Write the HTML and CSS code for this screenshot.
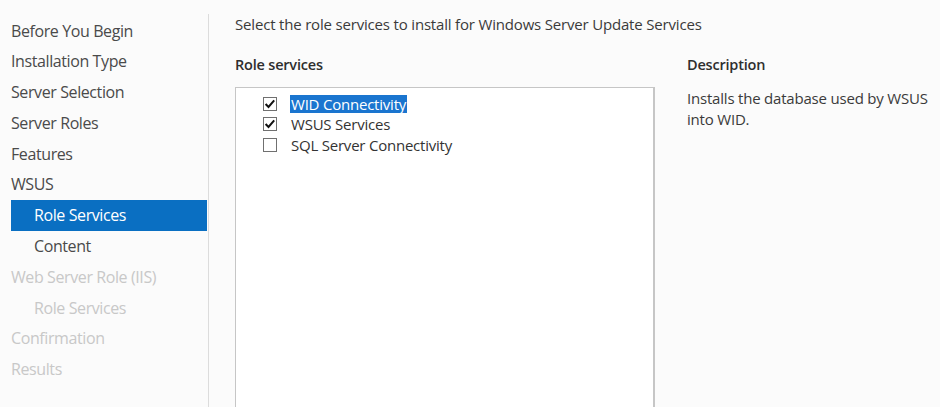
FILE: index.html
```html
<!DOCTYPE html>
<html>
<head>
<meta charset="utf-8">
<link rel="stylesheet" href="styles.css">
</head>
<body>
<div class="wizard">
  <nav class="steps">
    <div class="step">Before You Begin</div>
    <div class="step">Installation Type</div>
    <div class="step">Server Selection</div>
    <div class="step">Server Roles</div>
    <div class="step">Features</div>
    <div class="step">WSUS</div>
    <div class="step sub active">Role Services</div>
    <div class="step sub">Content</div>
    <div class="step disabled">Web Server Role (IIS)</div>
    <div class="step sub disabled">Role Services</div>
    <div class="step disabled">Confirmation</div>
    <div class="step disabled">Results</div>
  </nav>
  <main class="content">
    <div class="title">Select the role services to install for Windows Server Update Services</div>
    <div class="columns">
      <section class="roles">
        <div class="label">Role services</div>
        <div class="listbox">
          <div class="item"><span class="cb"><svg viewBox="0 0 14 14" width="14" height="14"><path d="M2.6 7 L5.5 10 L11.2 3.4" fill="none" stroke="#111" stroke-width="2"/></svg></span><span class="name selected">WID Connectivity</span></div>
          <div class="item"><span class="cb"><svg viewBox="0 0 14 14" width="14" height="14"><path d="M2.6 7 L5.5 10 L11.2 3.4" fill="none" stroke="#111" stroke-width="2"/></svg></span><span class="name">WSUS Services</span></div>
          <div class="item"><span class="cb"></span><span class="name">SQL Server Connectivity</span></div>
        </div>
      </section>
      <section class="desc">
        <div class="label">Description</div>
        <p class="desc-text">Installs the database used by WSUS into WID.</p>
      </section>
    </div>
  </main>
</div>
</body>
</html>
```

FILE: styles.css
```css
html, body {
  margin: 0;
  padding: 0;
  background: #fbfbfb;
}
body {
  font-family: "Open Sans", "Noto Sans", sans-serif;
  color: #3c3c3c;
  overflow: hidden;
}
.wizard {
  display: flex;
  height: 407px;
  overflow: hidden;
}
.steps {
  flex: none;
  width: 209px;
  box-sizing: border-box;
  padding: 1.5px 0 0 11px;
  margin-top: 14px;
  border-right: 1px solid #dcdcdc;
  display: flex;
  flex-direction: column;
}
.step {
  height: 30.8px;
  line-height: 30.8px;
  font-size: 16px;
  color: #4a4a4a;
  letter-spacing: -0.4px;
  white-space: nowrap;
  margin-right: 1px;
}
.step.sub {
  padding-left: 23px;
}
.step.active {
  background: #0a6fc2;
  color: #ffffff;
}
.step.disabled {
  color: #c8c8c8;
}
.content {
  flex: 1;
  padding-left: 26px;
  padding-top: 13px;
  display: flex;
  flex-direction: column;
}
.title {
  font-size: 15px;
  color: #3a3a3a;
  letter-spacing: -0.18px;
  line-height: 22px;
}
.columns {
  display: flex;
  flex: 1;
  margin-top: 20px;
}
.roles {
  flex: none;
  width: 420px;
  display: flex;
  flex-direction: column;
}
.label {
  font-size: 14.5px;
  font-weight: 600;
  color: #2e2e2e;
  line-height: 20px;
  letter-spacing: -0.2px;
}
.listbox {
  flex: 1;
  margin-top: 12px;
  background: #ffffff;
  border: 1px solid #c6c6c6;
  border-right-width: 2px;
  border-bottom: none;
  box-sizing: border-box;
  padding: 6px 0 0 27px;
}
.item {
  display: flex;
  align-items: center;
  height: 20.3px;
}
.cb {
  flex: none;
  width: 14px;
  height: 14px;
  box-sizing: border-box;
  border: 1px solid #707070;
  background: #fff;
  position: relative;
  margin-right: 13px;
}
.cb svg {
  display: block;
  position: absolute;
  left: -1px;
  top: -1px;
}
.name {
  font-size: 15px;
  color: #333;
  letter-spacing: -0.22px;
  line-height: 18px;
  padding: 0 1px;
}
.name.selected {
  background: #1a75cf;
  color: #fff;
}
.desc {
  flex: none;
  margin-left: 32px;
  width: 250px;
}
.desc-text {
  margin: 13px 0 0 0;
  font-size: 15px;
  color: #3a3a3a;
  line-height: 21px;
  letter-spacing: -0.2px;
}
```
